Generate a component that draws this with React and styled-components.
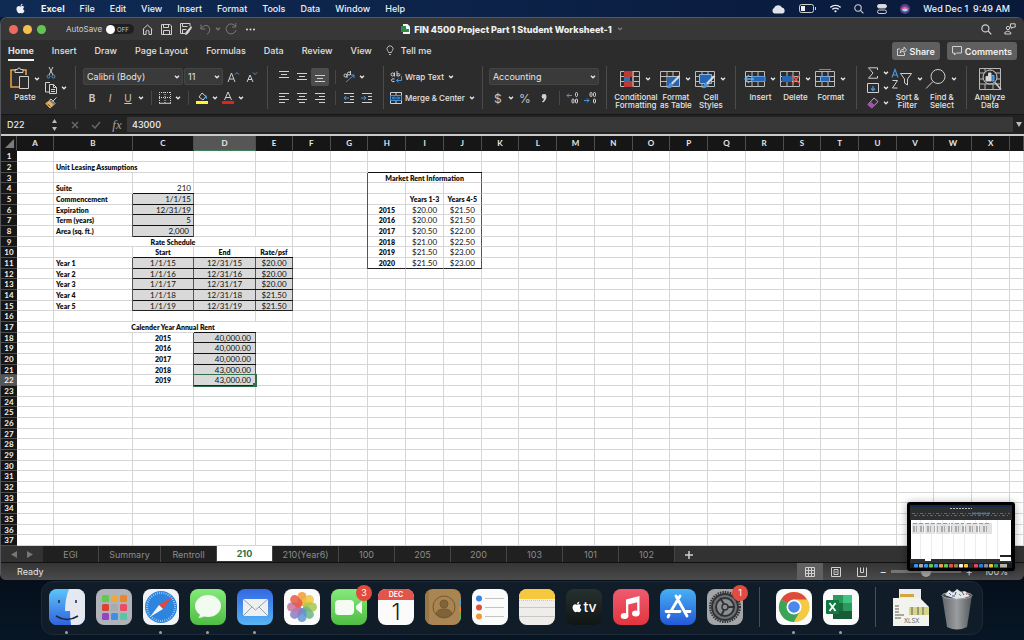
import React from 'react';
import styled, { createGlobalStyle, css } from 'styled-components';
import { FaApple, FaWifi } from 'react-icons/fa';

const GlobalStyle = createGlobalStyle`
  * {
    box-sizing: border-box;
  }

  body {
    margin: 0;
    background: #06101d;
    color: #e4e4e4;
    font-family: Inter, "Liberation Sans", sans-serif;
    font-size: 9px;
  }

  button, input, select {
    margin: 0;
    padding: 0;
    border: 0;
    background: none;
    color: inherit;
    font: inherit;
  }

  svg {
    display: block;
    flex: none;
  }
`;

const Desktop = styled.div`
  position: relative;
  display: flex;
  flex-direction: column;
  min-height: 100vh;
  background: linear-gradient(#0a2148, #081b3a 18px, #050d18 560px, #071625);
`;

/* menu bar */

const MenuBar = styled.nav`
  display: flex;
  align-items: center;
  justify-content: space-between;
  height: 17px;
  padding: 0 14px 0 15px;
  background: linear-gradient(90deg, #0f2a54, #09193a);
  white-space: nowrap;
`;

const MenuItems = styled.div`
  display: flex;
  align-items: center;
  gap: 15px;
`;

const MenuButton = styled.button`
  color: #eef1f6;
  font-size: 9px;
  line-height: 17px;
  font-weight: ${props => (props.$strong ? 700 : 500)};
`;

const StatusItems = styled.div`
  display: flex;
  align-items: center;
  gap: 13px;
  color: #eef1f6;
  font-weight: 500;
`;

/* window frame */

const Window = styled.main`
  border: 1px solid #55585c;
  border-width: 1px 0 0 1px;
  border-radius: 7px 7px 6px 6px;
  background: #2c2c2c;
  overflow: hidden;
`;

const TitleBar = styled.header`
  display: grid;
  grid-template-columns: 1fr auto 1fr;
  align-items: center;
  height: 22px;
  padding: 0 8px;
  background: #373737;
`;

const TitleSide = styled.div`
  display: flex;
  align-items: center;
  justify-content: ${props => (props.$end ? 'flex-end' : 'flex-start')};
  gap: ${props => (props.$end ? 12 : 8)}px;
`;

const Lights = styled.div`
  display: flex;
  gap: 5px;
  margin-right: 12px;
`;

const Light = styled.button`
  width: 9px;
  height: 9px;
  border-radius: 50%;
  background: ${props => props.$color};
`;

const AutoSave = styled.label`
  display: flex;
  align-items: center;
  gap: 4px;
  color: #d0d0d0;
  font-size: 8px;
`;

const Toggle = styled.span`
  display: flex;
  align-items: center;
  gap: 2px;
  width: 28px;
  height: 10px;
  border-radius: 5px;
  background: #1f1f1f;
  color: #c8c8c8;
  font-size: 6px;

  &::before {
    content: "";
    width: 9px;
    height: 9px;
    border-radius: 50%;
    background: #fff;
  }
`;

const HiddenCheck = styled.input`
  position: absolute;
  opacity: 0;
`;

const UndoGroup = styled.div`
  display: flex;
  align-items: center;
  gap: 3px;
`;

const DocTitle = styled.h1`
  display: flex;
  align-items: center;
  gap: 4px;
  margin: 0;
  color: #f0f0f0;
  font-size: 9px;
  font-weight: 800;
  white-space: nowrap;
`;

/* ribbon */

const TabBar = styled.div`
  display: flex;
  align-items: center;
  justify-content: space-between;
  height: 22px;
  padding: 0 7px;
`;

const TabList = styled.div`
  display: flex;
  align-items: center;
  gap: 18px;
`;

const RibbonTab = styled.button`
  display: flex;
  align-items: center;
  gap: 7px;
  height: 20px;
  border-bottom: 2px solid ${props => (props.$active ? '#f2f2f2' : 'transparent')};
  color: #e0e0e0;
  font-weight: ${props => (props.$active ? 700 : 500)};
  white-space: nowrap;
`;

const TellMe = styled(RibbonTab)`
  margin-left: -4px;
`;

const Actions = styled.div`
  display: flex;
  gap: 7px;
`;

const ActionButton = styled.button`
  display: flex;
  align-items: center;
  gap: 3px;
  height: 18px;
  padding: 0 5px;
  border-radius: 3px;
  background: #5f5f5f;
  color: #f0f0f0;
  font-weight: 600;
`;

const Ribbon = styled.section`
  display: flex;
  height: 53px;
  padding: 4px 0 5px;
  border-bottom: 1px solid #171717;
`;

const Group = styled.div`
  display: flex;
  padding: 0 ${props => props.$pad || 7}px;
  border-right: 1px solid ${props => (props.$last ? 'transparent' : '#4c4c4c')};
`;

const Stack = styled.div`
  display: flex;
  flex-direction: column;
`;

const Row = styled.div`
  display: flex;
  align-items: center;
  height: ${props => props.$height || 22}px;
`;

const Tool = styled.button`
  display: flex;
  align-items: center;
  justify-content: center;
  flex: none;
  width: ${props => props.$width || 18}px;
  height: 18px;
  border-radius: 2px;
  background: ${props => (props.$active ? '#4d4d4d' : 'none')};
`;

const Glyph = styled.span`
  color: #c8c8c8;
  font-size: ${props => props.$size || 10}px;
  font-weight: ${props => (props.$bold ? 700 : 400)};
  font-style: ${props => (props.$italic ? 'italic' : 'normal')};
  text-decoration: ${props => (props.$underline ? 'underline' : 'none')};
`;

const Separator = styled.span`
  width: 1px;
  height: 14px;
  margin: 0 4px 0 6px;
  background: #474747;
`;

const TextTool = styled.button`
  display: flex;
  align-items: center;
  gap: 3px;
  height: 18px;
  font-size: 8px;
  font-weight: 500;
  white-space: nowrap;
`;

const Picker = styled.div`
  display: flex;
  align-items: center;
  width: ${props => props.$width}px;
  height: 17px;
  margin-right: 1px;
  padding-right: 1px;
  border: 1px solid #454545;
  border-radius: 2px;
  background: #3a3a3a;
`;

const Select = styled.select`
  flex: 1;
  min-width: 0;
  height: 15px;
  padding-left: 3px;
  appearance: none;
  outline: none;
`;

const BigButton = styled.button`
  display: flex;
  flex-direction: column;
  align-items: center;
  width: ${props => props.$width || 36}px;
  height: 44px;
  white-space: nowrap;
`;

const BigTop = styled.span`
  display: flex;
  align-items: center;
  gap: 3px;
  height: 25px;
  margin-bottom: 2px;
`;

const BigLabel = styled.span`
  font-size: 8px;
  line-height: 8px;
  font-weight: 500;
`;

/* formula bar */

const FormulaBar = styled.div`
  display: flex;
  align-items: center;
  height: 19px;
  background: #222;
`;

const NameBox = styled.input`
  width: 46px;
  height: 16px;
  padding-left: 6px;
  font-weight: 500;
`;

const Stepper = styled.button`
  width: 15px;
  margin-right: 4px;
`;

const FxGlyph = styled.i`
  color: #a0a0a0;
  font-family: "Liberation Serif", serif;
  font-size: 13px;
`;

const FormulaInput = styled.input`
  flex: 1;
  min-width: 0;
  height: 15px;
  margin-left: 1px;
  padding-left: 5px;
  background: #383838;
  color: #f2f2f2;
  font-weight: 500;
`;

/* sheet */

const Sheet = styled.table`
  width: 100%;
  border-top: 2px solid #c9c9c9;
  border-collapse: separate;
  border-spacing: 0;
  table-layout: fixed;
  background: #fff;
  color: #111;
  font-family: Lato, "Liberation Sans", sans-serif;
  font-size: 8px;
  line-height: 9px;
`;

const ColumnHead = styled.th`
  height: 15px;
  padding: 0;
  border-right: 1px solid #4d4d4d;
  border-bottom: 1px solid ${props => (props.$active ? '#3f7f55' : '#161616')};
  background: ${props => (props.$active ? '#565656' : '#161616')};
  color: #e8e8e8;
  overflow: hidden;
`;

const SheetRow = styled.tr`
  height: 11px;

  &:nth-child(3n) {
    height: 10px;
  }
`;

const RowHead = styled.th`
  padding: 0;
  border-bottom: 1px solid #4d4d4d;
  background: ${props => (props.$active ? '#565656' : '#161616')};
  color: #f0f0f0;
  line-height: 8px;
`;

const shadow = edges => [
  edges.includes('l') ? '-1px 0 0 #555' : '',
  edges.includes('t') ? '0 -1px 0 #111' : ''
].filter(Boolean).join(', ') || 'none';

const Cell = styled.td`
  padding: 0 2px;
  border-right: 1px solid ${props => (props.$edges.includes('r') ? '#555' : '#d6d6d6')};
  border-bottom: 1px solid ${props => (props.$edges.includes('b') ? '#222' : '#d6d6d6')};
  background: ${props => (props.$shaded ? '#d9d9d9' : '#fff')};
  box-shadow: ${props => shadow(props.$edges)};
  font-size: ${props => (props.$bold ? 7 : 8)}px;
  font-weight: ${props => (props.$bold ? 800 : 400)};
  line-height: 8px;
  text-align: ${props => props.$align};
  white-space: nowrap;

  ${props => props.$indent && css`
    padding-right: 4px;
  `}

  ${props => props.$selected && css`
    position: relative;
    outline: 1px solid #2f7047;

    &::after {
      content: "";
      position: absolute;
      right: -2px;
      bottom: -2px;
      width: 4px;
      height: 4px;
      background: #2f7047;
    }
  `}
`;

/* sheet tabs and status bar */

const SheetTabs = styled.div`
  display: flex;
  height: 17px;
  border-bottom: 1px solid #111;
  background: #323232;
`;

const TabArrows = styled.div`
  display: flex;
  align-items: center;
  justify-content: center;
  gap: 10px;
  width: 42px;
`;

const SheetTab = styled.button`
  width: ${props => props.$width || 56}px;
  height: ${props => (props.$active ? 15 : 16)}px;
  border-right: 1px solid #454545;
  background: ${props => (props.$active ? '#fff' : '#202020')};
  color: ${props => (props.$active ? '#2f7047' : '#8c8c8c')};
  font-weight: ${props => (props.$active ? 700 : 400)};
  white-space: nowrap;
`;

const StatusBar = styled.footer`
  display: flex;
  align-items: center;
  height: 17px;
  padding: 0 16px;
  background: linear-gradient(#353535, #4a4a4a);
`;

const Ready = styled.span`
  flex: 1;
`;

const ViewButton = styled.button`
  display: flex;
  align-items: center;
  justify-content: center;
  width: 26px;
  height: 17px;
  background: ${props => (props.$active ? '#606060' : 'none')};
`;

const ZoomButton = styled.button`
  width: 16px;
  font-size: 11px;
`;

const Slider = styled.input`
  width: 70px;
  height: 3px;
  appearance: none;
  background: #757575;

  &::-webkit-slider-thumb {
    appearance: none;
    width: 10px;
    height: 10px;
    border-radius: 50%;
    background: #a8a8a8;
  }
`;

const ZoomValue = styled.span`
  margin-left: 7px;
`;

/* dock */

const Dock = styled.nav`
  display: flex;
  align-items: center;
  align-self: center;
  gap: 11px;
  height: 54px;
  margin-top: 1px;
  padding: 0 7px 3px;
  border: 1px solid #1d2937;
  border-radius: 12px;
  background: #111c29;
`;

const DockItem = styled.button`
  position: relative;
  width: 36px;
  height: 36px;

  ${props => props.$running && css`
    &::after {
      content: "";
      position: absolute;
      left: 16px;
      bottom: -9px;
      width: 3px;
      height: 3px;
      border-radius: 50%;
      background: #9aa1a9;
    }
  `}
`;

const DockDivider = styled.span`
  width: 1px;
  height: 40px;
  margin: 0 5px;
  background: #45505c;
`;

const Badge = styled.span`
  position: absolute;
  top: -4px;
  right: -5px;
  width: 16px;
  height: 16px;
  border-radius: 50%;
  background: #e24b3f;
  color: #fff;
  line-height: 16px;
`;

const Tile = styled.span`
  display: flex;
  align-items: center;
  justify-content: center;
  width: 36px;
  height: 36px;
  border-radius: 8px;
  background: ${props => props.$fill};
  color: #fff;
  overflow: hidden;
`;

const CalendarTile = styled(Tile)`
  flex-direction: column;
  justify-content: flex-start;
  color: #222;
  font-size: 23px;
  line-height: 24px;
  font-weight: 300;
`;

const CalendarMonth = styled.span`
  width: 100%;
  background: #e3544a;
  color: #fff;
  font-size: 7px;
  line-height: 11px;
  font-weight: 600;
`;

const TvText = styled.span`
  font-size: 14px;
  font-weight: 500;
`;

const Preview = styled.aside`
  position: absolute;
  top: 502px;
  right: 9px;
  width: 108px;
  height: 69px;
  padding: 3px;
  border-radius: 3px;
  background: #000;
  box-shadow: 0 1px 8px rgba(0, 0, 0, 0.35);
`;

/* icons */

const Icon = ({ w, h, children, ...rest }) => (
  <svg
    width={w}
    height={h}
    viewBox={`0 0 ${w} ${h}`}
    fill="none"
    stroke="#d0d0d0"
    strokeWidth="1"
    aria-hidden="true"
    {...rest}
  >
    {children}
  </svg>
);

const Chevron = ({ dim }) => (
  <Icon w={8} h={4} stroke={dim ? '#777' : '#e8e8e8'} strokeWidth="1.3"><path d="M2 .8 4 2.8 6 .8" /></Icon>
);

const SearchIcon = ({ size = 10 }) => (
  <Icon w={10} h={10} width={size} height={size} strokeWidth="1.1"><circle cx="4" cy="4" r="3.2" /><path d="m6.400 6.400 3 3" /></Icon>
);

const Lines = ({ rows }) => (
  <Icon w={12} h={12}>
    {rows.map(([x1, x2, y]) => <path key={y} d={`M${x1} ${y}H${x2}`} />)}
  </Icon>
);

const AlignIcons = {
  top: [[1, 11, 0.5], [3, 9, 3.5], [1, 11, 6.5]],
  middle: [[1, 11, 2.5], [3, 9, 5.5], [1, 11, 8.5]],
  bottom: [[1, 11, 4.5], [3, 9, 7.5], [1, 11, 10.5]],
  left: [[1, 11, 1.5], [1, 7, 4.5], [1, 11, 7.5], [1, 7, 10.5]],
  center: [[1, 11, 1.5], [3, 9, 4.5], [1, 11, 7.5], [3, 9, 10.5]],
  right: [[1, 11, 1.5], [5, 11, 4.5], [1, 11, 7.5], [5, 11, 10.5]]
};

const Indent = ({ out }) => (
  <Icon w={12} h={12}>
    <path d="M1 1.500h10M7 4.500h4M7 7.500h4M1 10.500h10" />
    <path stroke="#4b94d8" d={out ? 'M6 6H1m2-2L1 6l2 2' : 'M0 6h5M3 4l2 2-2 2'} />
  </Icon>
);

const PasteIcon = () => (
  <Icon w={20} h={23}>
    <path stroke="#e3a14a" strokeWidth="1.6" d="M6 3H1v17h8M13 3h3v5" />
    <path d="M5 2.500h2.500a1.500 1.500 0 0 1 3 0H13v3H5z" />
    <path fill="#2c2c2c" d="M9.500 9.500h9v12h-9z" />
  </Icon>
);

const CutIcon = () => (
  <Icon w={10} h={12}>
    <path d="m3 0 4 8M7 0 3 8" />
    <circle cx="2.500" cy="9.500" r="1.500" stroke="#4b94d8" />
    <circle cx="7.500" cy="9.500" r="1.500" stroke="#4b94d8" />
  </Icon>
);

const CopyIcon = () => (
  <Icon w={12} h={12}>
    <path d="M4 10H.5V.5H5M4.500 2.500h4l3 3v6h-7zM8.500 2.500v3h3M6 7.500h4M6 9.500h4" />
  </Icon>
);

const BrushIcon = () => (
  <Icon w={12} h={12}>
    <path d="m11.500.5-4 4M4.500 3l4.500 4.500 1-1L6 2z" />
    <path d="M4 4 .8 6.500 5 11l3.500-3z" fill="#e3b25f" stroke="#e3b25f" />
    <path d="m2.500 7 3 2.500" stroke="#5b4420" />
  </Icon>
);

const FontSizeIcon = ({ down }) => (
  <Icon w={13} h={12}>
    <path d={down ? 'm2 11 3-7 3 7M3 8.500h4' : 'm1 11 3.500-9L8 11M2.300 8h4.400'} />
    <path stroke="#4b94d8" d={down ? 'm8 1.500 2 2 2-2' : 'm8 3.500 2-2 2 2'} />
  </Icon>
);

const BorderIcon = () => (
  <Icon w={12} h={12}>
    <path strokeDasharray="1 1" d="M.5 0v11M11.500 0v11M6 0v11M0 .5h12M0 5.500h12" />
    <path d="M0 11.300h12" />
  </Icon>
);

const FillIcon = () => (
  <Icon w={12} h={12}>
    <path d="m3 5 3-4 4 3.500-3 3.500z" />
    <path d="M9.500 3q2 2 1 4" stroke="#4b94d8" />
    <path d="M0 10.500h12" stroke="#fff42c" strokeWidth="3" />
  </Icon>
);

const FontColorIcon = () => (
  <Icon w={12} h={12}>
    <path d="m2.500 8 3.500-8 3.500 8M3.500 5.500h5" />
    <path d="M0 10.500h12" stroke="#e2231a" strokeWidth="3" />
  </Icon>
);

const OrientationIcon = () => (
  <Icon w={12} h={12}>
    <circle cx="2.500" cy="4.500" r="1.500" /><circle cx="6" cy="2.500" r="1.500" /><path d="M4 3v4M7.500 0v4" />
    <path stroke="#4b94d8" d="m3 11 8-7M8 4h3v3" />
  </Icon>
);

const WrapIcon = () => (
  <Icon w={12} h={12}>
    <circle cx="2.500" cy="3.500" r="1.500" /><path d="M4.500 1.500v4M7 0v5M7 3q3-1 3 .7T7 5M4.500 8q-3-1-3 1.200t3 1.300" />
    <path stroke="#4b94d8" d="M11.500 5v4.500H6.500m2-2-2 2 2 2" />
  </Icon>
);

const MergeIcon = () => (
  <Icon w={12} h={12}>
    <path d="M.5.500h11v11H.5zM6 .5v3M6 8.500v3" />
    <path fill="#173a5e" stroke="#4b94d8" d="M.5 3.500h11v5H.5zM2 6h8M4 4.500 2.500 6 4 7.500M8 4.500 9.500 6 8 7.500" />
  </Icon>
);

const CommaIcon = () => (
  <Icon w={6} h={9} fill="#d0d0d0" stroke="none">
    <path d="M3 0a2.400 2.400 0 0 1 2.500 2.500Q5.500 6 2 8.500L1 7.500Q2.700 6.300 3 4.800A2.400 2.400 0 0 1 3 0z" />
  </Icon>
);

const DecimalIcon = ({ less }) => (
  <Icon w={13} h={12}>
    <path stroke="#4b94d8" d={less ? 'M0 8.500h5m-2-2 2 2-2 2' : 'M6 3.500H1m2-2-2 2 2 2'} />
    <rect x="9.500" y=".5" width="2" height="4" rx="1" />
    <rect x="9.500" y="7" width="2" height="4" rx="1" />
    {less ? <rect x="6" y=".5" width="2" height="4" rx="1" /> : <rect x="6" y="7" width="2" height="4" rx="1" />}
  </Icon>
);

const GridIcon = ({ children }) => (
  <Icon w={22} h={20}>
    <path d="M1.500 2.500h19v15h-19zM1.500 7.500h19M1.500 12.500h19M8 2.500v15M14 2.500v15" stroke="#bdbdbd" />
    {children}
  </Icon>
);

const PaintBrush = () => (
  <>
    <path d="m20.500 7-8 8" stroke="#d8d8d8" strokeWidth="2.200" />
    <path d="M12 13.500q-2 .5-3 3.500-1 1.500-2 1.800 5.500 1.700 7-2.800z" fill="#4b94d8" stroke="none" />
  </>
);

const ConditionalIcon = () => (
  <GridIcon>
    <path fill="#b93a36" stroke="none" d="M5 2h9v6H5zM5 12h10v6H5z" />
    <path fill="#2f6fb5" stroke="none" d="M5 8h6v4H5z" />
    <path d="M14 2v16" stroke="#bdbdbd" />
  </GridIcon>
);

const FormatTableIcon = () => (
  <GridIcon><path fill="#2565b4" stroke="none" d="M8 8h12v9H8z" /><PaintBrush /></GridIcon>
);

const CellStylesIcon = () => (
  <GridIcon><path fill="#2565b4" stroke="#8ab6e4" d="M5.500 5.500h12v9h-12z" /><PaintBrush /></GridIcon>
);

const InsertIcon = () => (
  <GridIcon>
    <path fill="#2565b4" stroke="#5f9fe0" d="M8 7.500h13v5H8z" />
    <path stroke="#6cabe8" strokeWidth="1.300" d="M10 10H1m4-4-4 4 4 4" />
  </GridIcon>
);

const DeleteIcon = () => (
  <GridIcon>
    <path fill="#2565b4" stroke="none" d="M3 7h10v6H3z" />
    <path stroke="#e0564b" strokeWidth="1.300" d="m13 6 8 9M21 6l-8 9" />
  </GridIcon>
);

const FormatIcon = () => (
  <GridIcon>
    <path fill="#2565b4" stroke="#6cabe8" d="M6.500 7.500h9v5h-9z" />
    <path stroke="#4b94d8" d="M5 .5h12" />
  </GridIcon>
);

const SumIcon = () => (
  <Icon w={12} h={12}><path d="M10.500 3V.800H1.500L6 6l-4.500 5.200h9V9" /></Icon>
);

const FillDownIcon = () => (
  <Icon w={12} h={12}><path d="M.5 1.500h11v9H.5z" /><path stroke="#4b94d8" strokeWidth="1.300" d="M6 4v4.500M4 6.500l2 2 2-2" /></Icon>
);

const EraserIcon = () => (
  <Icon w={12} h={12}><path d="m7 1 4 3.500L5 11 1 7.500z" stroke="#d59be0" /><path d="m3.500 5 4 3.500L5 11 1 7.500z" fill="#a74cb8" stroke="#a74cb8" /></Icon>
);

const SortIcon = () => (
  <Icon w={22} h={22}>
    <path stroke="#4b94d8" strokeWidth="1.200" d="M1 9.500 4 1.500l3 8M2 7h4" />
    <path d="M1.500 12.500h5l-5 7.500h5M9.500 5.500h11L16.500 11v6L13.500 15v-4z" />
  </Icon>
);

const FindIcon = () => (
  <Icon w={22} h={22}><circle cx="13" cy="8.500" r="7" /><path d="m8 13.500-7 7" /></Icon>
);

const AnalyzeIcon = () => (
  <Icon w={24} h={24}>
    <path d="M1.500 1.500h21v21h-21zM1.500 6h21M1.500 12h4M18 12h4M1.500 17h21M7 1.500v3M7 17v5M15 17v5" stroke="#b8b8b8" />
    <circle cx="12" cy="10" r="7" fill="#2c2c2c" />
    <path d="M8 9.500h2.500V14H8zM10.500 6H13v8h-2.500z" fill="#ddd" />
    <path d="M13.500 8.500H16V14h-2.500z" fill="#2f7fd0" stroke="#6cabe8" />
    <path d="m17 15.500 6 7" strokeWidth="1.500" />
  </Icon>
);

/* dock artwork */

const FinderArt = () => (
  <svg width="36" height="36">
    <defs><linearGradient id="finder" x2="0" y2="1"><stop stopColor="#5cc5f9" /><stop offset="1" stopColor="#2f62df" /></linearGradient></defs>
    <path fill="url(#finder)" d="M0 0h36v36H0z" />
    <path fill="#e3e8f1" d="M20 0h16v36H22q-1-7-1-14h-5q0-12 4-22z" />
    <path d="M10 11v3M27 11v3M7 27q11 7 22 0" stroke="#1c2938" strokeWidth="1.500" fill="none" />
  </svg>
);

const pads = ['#63c84b', '#f0a73b', '#e8862e', '#dd4236', '#a5abb0', '#ee4b62', '#9346be', '#3b8fe8', '#5ac5a5'];

const LaunchpadArt = () => (
  <svg width="36" height="36">
    {pads.map((color, i) => (
      <rect key={color} x={6 + (i % 3) * 9} y={6 + Math.floor(i / 3) * 9} width="7" height="7" rx="1.500" fill={color} />
    ))}
  </svg>
);

const SafariArt = () => (
  <svg width="36" height="36">
    <circle cx="18" cy="18" r="16" fill="#2d85df" />
    <circle cx="18" cy="18" r="14" fill="none" stroke="#b8dcf8" strokeWidth="2" strokeDasharray=".7 1.500" />
    <path d="m29 8-13 8 4 4z" fill="#ec4438" /><path d="m7 28 9-12 4 4z" fill="#f4f4f4" />
  </svg>
);

const MessagesArt = () => (
  <svg width="36" height="36"><ellipse cx="18" cy="17" rx="13" ry="11" fill="#f2fbf0" /><path d="M10 24q0 4-2 5 5 0 7-3z" fill="#f2fbf0" /></svg>
);

const MailArt = () => (
  <svg width="36" height="36" fill="none" stroke="#989fa7">
    <path fill="#edf0f3" stroke="none" d="M6 10h25v17H6z" /><path d="m6 10 12.500 11L31 10M6 27l9-9M31 27l-9-9" />
  </svg>
);

const petals = ['#f29a35', '#edc63b', '#a6c750', '#6bb783', '#5d95d4', '#8b7ac4', '#c573a0', '#e6594a'];

const PhotosArt = () => (
  <svg width="36" height="36">
    {petals.map((color, i) => (
      <rect key={color} x="13.500" y="3" width="9" height="14" rx="4.500" fill={color} opacity=".85" transform={`rotate(${i * 45} 18 18)`} />
    ))}
  </svg>
);

const FaceTimeArt = () => (
  <svg width="36" height="36" fill="#f4fbf3"><rect x="4" y="11" width="19" height="15" rx="4" /><path d="m25 17 6-5v13l-6-5z" /></svg>
);

const ContactsArt = () => (
  <svg width="36" height="36" fill="none" stroke="#765a30">
    <path stroke="none" fill="#9a7843" d="M0 0h4v36H0z" />
    <path stroke="none" fill="#4a9ed6" d="M34.500 11H36v6h-1.500z" /><path stroke="none" fill="#e88b35" d="M34.500 18H36v6h-1.500z" /><path stroke="none" fill="#5dbb55" d="M34.500 25H36v6h-1.500z" />
    <circle cx="19" cy="18" r="11" /><circle cx="19" cy="15" r="4" fill="#80633a" /><path fill="#80633a" d="M11 25q1-5 8-5t8 5q-8 7-16 0z" />
  </svg>
);

const RemindersArt = () => (
  <svg width="36" height="36" stroke="#c3c3c3">
    <path d="M13 9.500h19M13 18.500h19M13 27.500h19" />
    <g stroke="none"><circle cx="7" cy="9.500" r="3" fill="#3b7fe8" /><circle cx="7" cy="18.500" r="3" fill="#e0503e" /><circle cx="7" cy="27.500" r="3" fill="#e89b38" /></g>
  </svg>
);

const NotesArt = () => (
  <svg width="36" height="36" stroke="#c9c8c4">
    <path stroke="none" fill="#f6c83e" d="M0 0h36v10H0z" /><path d="M0 11.500h36" strokeDasharray="1 1" /><path d="M0 18.500h36M0 27.500h36" />
  </svg>
);

const MusicArt = () => (
  <svg width="36" height="36" fill="#fff">
    <path d="M13 10.500 26.500 7v17.500h-2.300V13.200l-8.900 2.300v12H13z" />
    <ellipse cx="11.500" cy="27" rx="3.800" ry="3" /><ellipse cx="22.800" cy="24.500" rx="3.800" ry="3" />
  </svg>
);

const AppStoreArt = () => (
  <svg width="36" height="36" stroke="#fff" strokeWidth="2.800" strokeLinecap="round"><path d="m16 7 11 20M20 7 11 22M6 22.500h14M25 22.500h5M9 26l-1 2" /></svg>
);

const SettingsArt = () => (
  <svg width="36" height="36" fill="none" stroke="#303235">
    <circle cx="18" cy="18" r="15" strokeWidth="2" strokeDasharray="1.500 1" />
    <circle cx="18" cy="18" r="13" fill="#6d7074" strokeWidth="2" />
    <circle cx="18" cy="18" r="9" fill="#8c8f92" strokeWidth="2" />
    <circle cx="18" cy="18" r="3" strokeWidth="1.500" /><path d="m17 21-3 6M21 18h7M17 15l-4-6" strokeWidth="2" />
  </svg>
);

const ChromeArt = () => (
  <svg width="36" height="36">
    <circle cx="18" cy="18" r="15" fill="#f4ca45" />
    <path d="M18 18 5 10.500a15 15 0 0 1 26 0z" fill="#dd4b3e" /><path d="M18 18 5 10.500A15 15 0 0 0 18 33l6-11z" fill="#3ba458" />
    <path d="M18 10.500h13.500a15 15 0 0 1-13.500 22.500l6.500-11z" fill="#f4ca45" />
    <circle cx="18" cy="18" r="7.500" fill="#fff" /><circle cx="18" cy="18" r="5.800" fill="#4a87ee" />
  </svg>
);

const ExcelArt = () => (
  <svg width="36" height="36">
    <path fill="#2b9a5d" d="M10 6h10v8H10z" /><path fill="#3fc481" d="M20 6h9v8h-9z" />
    <path fill="#1c6e41" d="M10 14h10v8H10z" /><path fill="#2b9a5d" d="M20 14h9v8h-9z" />
    <path fill="#185c37" d="M10 22h19v8H10z" /><rect x="3" y="11" width="13" height="14" rx="1" fill="#107840" />
    <path d="m6.500 14 6 8M12.500 14l-6 8" stroke="#fff" strokeWidth="1.800" />
  </svg>
);

const FilesArt = () => (
  <svg width="38" height="38">
    <path fill="#ececec" d="M7 0h22v20H7z" /><path fill="#d6a541" d="M8 5h14v3H8z" />
    <path fill="#f3f3ee" d="M1 9h27l9 9v19H1z" /><path fill="#d7d58c" d="M17 18h20v8H17z" />
    <path d="M3 17h4M3 20h4M3 23h4M3 26h9M3 29h6M20 18v8M26 18v8M31 18v8" stroke="#5c5c50" strokeWidth="1" />
    <text x="12" y="34" fontSize="6" fill="#666">XLSX</text>
  </svg>
);

const TrashArt = () => (
  <svg width="36" height="42">
    <defs><linearGradient id="bin"><stop stopColor="#63676a" /><stop offset=".5" stopColor="#9a9da0" /><stop offset="1" stopColor="#55595c" /></linearGradient></defs>
    <path fill="url(#bin)" d="M3 6h30l-5 32q-10 5-20 0z" />
    <ellipse cx="18" cy="6.500" rx="15" ry="3.500" fill="#3f4346" stroke="#a4a7aa" />
    <path fill="#e4e6e8" d="m6 6 4-5 4 3 4-4 4 3 4-1 5 5-6 2-8 1z" />
    <path d="m10 4 2 2M17 3l-1 3M23 3l2 3M13 7h3" stroke="#3c5d8b" /><path d="m20 5 2 2M27 4l1 2" stroke="#cc6344" />
  </svg>
);

const previewDots = ['#3a93e8', '#a9adb2', '#3a93e8', '#63c84b', '#3a93e8', '#e8a24c', '#63c84b', '#e3544a', '#a07d45', '#f2f2f2', '#f6c83e', '#2b3131', '#e8455a', '#2d7be0', '#8a8c8e', '#e8c23c', '#2b9a5d'];

const PreviewArt = () => (
  <svg width="102" height="63">
    <path fill="#2d2e30" d="M0 0h102v15H0z" /><path fill="#14264a" d="M0 0h102v2H0z" />
    <path d="M2 8.500h98M4 10.500h94" stroke="#66696c" strokeDasharray="3 2 1 2" /><path d="M40 3.500h22" stroke="#bbb" strokeDasharray="2 1" />
    <path d="M62 8.500h18" stroke="#5b6f8a" strokeWidth="2" strokeDasharray="4 1" />
    <path fill="#fff" d="M1 15h100v39H1z" />
    <path stroke="#ececec" d="M10.500 15v39M21.500 15v39M32.500 15v39M43.500 15v39M54.500 15v39M65.500 15v39M76.500 15v39M87.500 15v39" />
    <path fill="#e2e2e2" d="M2 18h80v11H2z" /><path d="M3 18.500h78" stroke="#999" strokeDasharray="4 2" />
    <path d="M3 24h76" stroke="#aaa" strokeWidth="6" strokeDasharray="2 1 1 3" />
    <path stroke="#f5f5f5" d="M14.500 18v11M25.500 18v11M40.500 18v11M54.500 18v11M68.500 18v11" />
    <path fill="#2d2e30" d="M0 54h102v4H0z" /><path fill="#fff" d="M15 54h6v2h-6zM90 50h11v6H90z" /><path fill="#222" d="M90 50h11v2H90z" />
    <path fill="#131d2b" d="M0 58h102v5H0z" />
    {previewDots.map((color, i) => <rect key={i} x={4 + i * 5} y="59" width="4" height="3.500" rx=".8" fill={color} />)}
    <rect x="90" y="59" width="7" height="3.500" fill="#b5b5a6" />
  </svg>
);

/* data */

const columns = 'ABCDEFGHIJKLMNOPQRSTUVWX'.split('');
const columnWidths = { A: 37, B: 79, C: 61, D: 62, E: 37 };
const rowCount = 37;

const cells = {
  B2: { text: 'Unit Leasing Assumptions', bold: true, span: 2 },
  B4: { text: 'Suite', bold: true },
  C4: { text: '210', align: 'right' },
  B9: { text: 'Rate Schedule', bold: true, align: 'center', span: 4 },
  C10: { text: 'Start', bold: true, align: 'center' },
  D10: { text: 'End', bold: true, align: 'center' },
  E10: { text: 'Rate/psf', bold: true, align: 'center' },
  B17: { text: 'Calender Year Annual Rent', bold: true, align: 'center', span: 4 },
  H3: { text: 'Market Rent Information', bold: true, align: 'center', span: 3, edges: 'tlr' },
  H4: { edges: 'l' },
  J4: { edges: 'r' },
  H5: { edges: 'l' },
  I5: { text: 'Years 1-3', bold: true, align: 'center' },
  J5: { text: 'Years 4-5', bold: true, align: 'center', edges: 'r' }
};

[
  ['Commencement', '1/1/15'],
  ['Expiration', '12/31/19'],
  ['Term (years)', '5'],
  ['Area (sq. ft.)', '2,000']
].forEach(([label, value], i) => {
  cells[`B${5 + i}`] = { text: label, bold: true };
  cells[`C${5 + i}`] = { text: value, align: 'right', shaded: true, edges: 'tlrb', indent: i === 3 };
});

['$20.00', '$20.00', '$20.00', '$21.50', '$21.50'].forEach((rate, i) => {
  const row = 11 + i;
  const box = { align: 'center', shaded: true, edges: 'tlrb' };
  cells[`B${row}`] = { text: `Year ${i + 1}`, bold: true };
  cells[`C${row}`] = { text: `1/1/${15 + i}`, ...box };
  cells[`D${row}`] = { text: `12/31/${15 + i}`, ...box };
  cells[`E${row}`] = { text: rate, ...box };
});

['40,000.00', '40,000.00', '40,000.00', '43,000.00', '43,000.00'].forEach((rent, i) => {
  cells[`C${18 + i}`] = { text: `${2015 + i}`, bold: true, align: 'center' };
  cells[`D${18 + i}`] = { text: rent, align: 'right', indent: true, shaded: true, edges: 'tlrb', selected: i === 4 };
});

[
  ['$20.00', '$21.50'],
  ['$20.00', '$21.50'],
  ['$20.50', '$22.00'],
  ['$21.00', '$22.50'],
  ['$21.50', '$23.00'],
  ['$21.50', '$23.00']
].forEach(([early, late], i) => {
  const bottom = i === 5 ? 'b' : '';
  cells[`H${6 + i}`] = { text: `${2015 + i}`, bold: true, align: 'center', edges: `l${bottom}` };
  cells[`I${6 + i}`] = { text: early, align: 'center', edges: bottom };
  cells[`J${6 + i}`] = { text: late, align: 'center', edges: `r${bottom}` };
});

const sheets = [
  ['EGI'], ['Summary', 62], ['Rentroll'], ['210'], ['210(Year6)', 66],
  ['100'], ['205'], ['200'], ['103'], ['101'], ['102']
];

const dock = [
  { name: 'Finder', fill: '#3b8fee', art: <FinderArt />, running: true },
  { name: 'Launchpad', fill: '#b0b4b9', art: <LaunchpadArt /> },
  { name: 'Safari', fill: '#f2f3f4', art: <SafariArt />, running: true },
  { name: 'Messages', fill: 'linear-gradient(#85ea7a, #4fbd43)', art: <MessagesArt />, running: true },
  { name: 'Mail', fill: 'linear-gradient(#3567e2, #57b5f5)', art: <MailArt />, running: true },
  { name: 'Photos', fill: '#fbfbfb', art: <PhotosArt /> },
  { name: 'FaceTime', fill: 'linear-gradient(#85ea7a, #4fbd43)', art: <FaceTimeArt />, badge: '3' },
  { name: 'Calendar' },
  { name: 'Contacts', fill: '#a88552', art: <ContactsArt /> },
  { name: 'Reminders', fill: '#fbfbfb', art: <RemindersArt /> },
  { name: 'Notes', fill: '#eeede9', art: <NotesArt /> },
  { name: 'TV', fill: 'linear-gradient(#26322f, #101414)', art: <><FaApple size={12} /><TvText>tv</TvText></> },
  { name: 'Music', fill: 'linear-gradient(#ef5b70, #e3353f)', art: <MusicArt /> },
  { name: 'App Store', fill: 'linear-gradient(#46b0f3, #2459d8)', art: <AppStoreArt /> },
  { name: 'System Preferences', fill: '#a3a5a7', art: <SettingsArt />, badge: '1' },
  null,
  { name: 'Chrome', fill: '#fbfbfb', art: <ChromeArt />, running: true },
  { name: 'Excel', fill: '#fbfbfb', art: <ExcelArt />, running: true },
  null
];

const menus = ['Excel', 'File', 'Edit', 'View', 'Insert', 'Format', 'Tools', 'Data', 'Window', 'Help'];
const ribbonTabs = ['Home', 'Insert', 'Draw', 'Page Layout', 'Formulas', 'Data', 'Review', 'View'];

const TopMenu = () => (
  <MenuBar aria-label="Menu bar">
    <MenuItems>
      <MenuButton aria-label="Apple menu"><FaApple size={11} /></MenuButton>
      {menus.map((name, i) => <MenuButton key={name} $strong={i === 0}>{name}</MenuButton>)}
    </MenuItems>
    <StatusItems>
      <Icon w={15} h={10} fill="#dfe3ea" stroke="none"><path d="M3.500 9.500a3 3 0 0 1-.5-5.500A4.500 4.500 0 0 1 11 3.500a3.200 3.200 0 0 1 1 6z" /></Icon>
      <Icon w={18} h={9}><rect x=".5" y=".5" width="14" height="8" rx="2" /><path d="M16.500 3v3" /><rect x="2" y="2" width="4" height="5" fill="#eee" stroke="none" /></Icon>
      <FaWifi size={11} />
      <SearchIcon />
      <Icon w={10} h={10}><rect x=".5" y=".5" width="9" height="3.500" rx="1.700" fill="#ddd" /><rect x=".5" y="6" width="9" height="3.500" rx="1.700" /></Icon>
      <Icon w={10} h={10} stroke="none"><circle cx="5" cy="5" r="5" fill="#5a3f8f" /><path d="M1 5q4-5 8 0-4 4-8 0z" fill="#e25c8c" /><path d="M2 6q3-3 6 0-3 3-6 0z" fill="#8fe0ee" /></Icon>
      <span>Wed Dec 1&nbsp; 9:49 AM</span>
    </StatusItems>
  </MenuBar>
);

const Title = () => (
  <TitleBar>
    <TitleSide>
      <Lights>
        <Light $color="#ec6a5e" aria-label="Close" />
        <Light $color="#f4bf4f" aria-label="Minimize" />
        <Light $color="#61c554" aria-label="Zoom window" />
      </Lights>
      <AutoSave>
        AutoSave
        <HiddenCheck type="checkbox" />
        <Toggle>OFF</Toggle>
      </AutoSave>
      <Icon w={11} h={11}><path d="M.8 5.500 5.500 1l4.700 4.500M1.500 5v5.500H4V7q1.500-1.500 3 0v3.500h2.500V5" /></Icon>
      <Icon w={11} h={11}><path d="M.5.500h8.500l1.500 1.500v8.500H.5zM2.500.5v3h5v-3M2.500 10.500V6.500h6v4" /></Icon>
      <Icon w={12} h={12}><path d="M5 10.500H.5V.5h9.500V3M2.500.5v3h5M2.500 10V6.500h4" /><path d="m11 3.500-5 6-.5 2 2-.8 4-6z" fill="#ddd" /></Icon>
      <UndoGroup>
        <Icon w={11} h={11} stroke="#7a7a7a"><path d="M1 .5v4.500h4.500M1 5q3-5 7-3 4 4-1 8.500" /></Icon>
        <Chevron dim />
        <Icon w={12} h={12} stroke="#7a7a7a"><path d="M10.500 3.500A5 5 0 1 0 11 7M10.800 0v4H7" /></Icon>
      </UndoGroup>
      <Icon w={11} h={3} fill="#ddd" stroke="none"><circle cx="2" cy="1.500" r="1" /><circle cx="5.500" cy="1.500" r="1" /><circle cx="9" cy="1.500" r="1" /></Icon>
    </TitleSide>
    <DocTitle>
      <Icon w={9} h={10} stroke="none"><path fill="#f2f2f2" d="M2 0h4.500L9 2.500V10H2z" /><path fill="#2d8a4e" d="M0 2h5v6H0zM5 5h3v3H5z" /></Icon>
      FIN 4500 Project Part 1 Student Worksheet-1
      <Chevron dim />
    </DocTitle>
    <TitleSide $end>
      <SearchIcon size={11} />
      <Icon w={12} h={12}><circle cx="4" cy="5" r="1.700" /><path d="M.8 11V9.500q3-3 6 0V11zM6.500.8h4.700v3.400H9L7.500 5.500V4.200h-1z" /></Icon>
    </TitleSide>
  </TitleBar>
);

const Tabs = () => (
  <TabBar>
    <TabList role="tablist">
      {ribbonTabs.map((name, i) => (
        <RibbonTab key={name} role="tab" aria-selected={i === 0} $active={i === 0}>{name}</RibbonTab>
      ))}
      <TellMe>
        <Icon w={8} h={11} stroke="#b8b8b8"><path d="M2.500 7.500q0-1-1-2a3 3 0 1 1 5 0q-1 1-1 2zM3 9.500h2" /></Icon>
        Tell me
      </TellMe>
    </TabList>
    <Actions>
      <ActionButton>
        <Icon w={10} h={10}><path d="M3 3H.5v6.500h7V7M3 7q0-4 4-4V1l2.500 3L7 6.500V5Q5 5 3 7z" /></Icon>
        Share
      </ActionButton>
      <ActionButton>
        <Icon w={10} h={10}><path d="M.5.500h9v6.500H4.500l-2 2V7h-2z" /></Icon>
        Comments
      </ActionButton>
    </Actions>
  </TabBar>
);

const Big = ({ icon, lines, width, plain }) => (
  <BigButton $width={width}>
    <BigTop>{icon}{!plain && <Chevron />}</BigTop>
    {lines.map(line => <BigLabel key={line}>{line}</BigLabel>)}
  </BigButton>
);

const RibbonTools = () => (
  <Ribbon aria-label="Home ribbon">
    <Group>
      <Big width={34} icon={<PasteIcon />} lines={['Paste']} />
      <Stack>
        <Row $height={14}><Tool aria-label="Cut"><CutIcon /></Tool></Row>
        <Row $height={16}><Tool aria-label="Copy"><CopyIcon /></Tool></Row>
        <Row $height={14}><Tool aria-label="Format painter"><BrushIcon /></Tool></Row>
      </Stack>
      <Row $height={44}><Chevron /></Row>
    </Group>
    <Group>
      <Stack>
        <Row>
          <Picker $width={100}>
            <Select aria-label="Font"><option>Calibri (Body)</option></Select>
            <Chevron />
          </Picker>
          <Picker $width={39}>
            <Select aria-label="Font size"><option>11</option></Select>
            <Chevron />
          </Picker>
          <Tool aria-label="Grow font"><FontSizeIcon /></Tool>
          <Tool aria-label="Shrink font"><FontSizeIcon down /></Tool>
        </Row>
        <Row>
          <Tool aria-label="Bold"><Glyph $bold>B</Glyph></Tool>
          <Tool aria-label="Italic"><Glyph $italic>I</Glyph></Tool>
          <Tool aria-label="Underline"><Glyph $underline>U</Glyph></Tool>
          <Chevron />
          <Separator />
          <Tool aria-label="Borders"><BorderIcon /></Tool>
          <Chevron />
          <Separator />
          <Tool aria-label="Fill color"><FillIcon /></Tool>
          <Chevron />
          <Tool aria-label="Font color"><FontColorIcon /></Tool>
          <Chevron />
        </Row>
      </Stack>
    </Group>
    <Group>
      <Stack>
        <Row>
          <Tool aria-label="Align top"><Lines rows={AlignIcons.top} /></Tool>
          <Tool aria-label="Align middle"><Lines rows={AlignIcons.middle} /></Tool>
          <Tool aria-label="Align bottom" $active><Lines rows={AlignIcons.bottom} /></Tool>
          <Separator />
          <Tool aria-label="Orientation"><OrientationIcon /></Tool>
          <Chevron />
        </Row>
        <Row>
          <Tool aria-label="Align left"><Lines rows={AlignIcons.left} /></Tool>
          <Tool aria-label="Align center"><Lines rows={AlignIcons.center} /></Tool>
          <Tool aria-label="Align right"><Lines rows={AlignIcons.right} /></Tool>
          <Separator />
          <Tool aria-label="Decrease indent"><Indent out /></Tool>
          <Tool aria-label="Increase indent"><Indent /></Tool>
        </Row>
      </Stack>
    </Group>
    <Group $pad={6}>
      <Stack>
        <Row><TextTool><WrapIcon />Wrap Text<Chevron /></TextTool></Row>
        <Row><TextTool><MergeIcon />Merge &amp; Center<Chevron /></TextTool></Row>
      </Stack>
    </Group>
    <Group $pad={6}>
      <Stack>
        <Row>
          <Picker $width={110}>
            <Select aria-label="Number format"><option>Accounting</option></Select>
            <Chevron />
          </Picker>
        </Row>
        <Row>
          <Tool aria-label="Currency"><Glyph $size={12}>$</Glyph></Tool>
          <Chevron />
          <Tool aria-label="Percent" $width={20}><Glyph $size={12}>%</Glyph></Tool>
          <Tool aria-label="Comma style"><CommaIcon /></Tool>
          <Separator />
          <Tool aria-label="Increase decimal"><DecimalIcon /></Tool>
          <Tool aria-label="Decrease decimal"><DecimalIcon less /></Tool>
        </Row>
      </Stack>
    </Group>
    <Group>
      <Big width={44} icon={<ConditionalIcon />} lines={['Conditional', 'Formatting']} />
      <Big width={36} icon={<FormatTableIcon />} lines={['Format', 'as Table']} />
      <Big width={34} icon={<CellStylesIcon />} lines={['Cell', 'Styles']} />
    </Group>
    <Group>
      <Big width={35} icon={<InsertIcon />} lines={['Insert']} />
      <Big width={35} icon={<DeleteIcon />} lines={['Delete']} />
      <Big icon={<FormatIcon />} lines={['Format']} />
    </Group>
    <Group>
      <Stack>
        <Row $height={14}><Tool aria-label="AutoSum"><SumIcon /></Tool><Chevron /></Row>
        <Row $height={16}><Tool aria-label="Fill"><FillDownIcon /></Tool><Chevron /></Row>
        <Row $height={14}><Tool aria-label="Clear"><EraserIcon /></Tool><Chevron /></Row>
      </Stack>
      <Big width={35} icon={<SortIcon />} lines={['Sort &', 'Filter']} />
      <Big width={34} icon={<FindIcon />} lines={['Find &', 'Select']} />
    </Group>
    <Group $pad={5} $last>
      <Big plain icon={<AnalyzeIcon />} lines={['Analyze', 'Data']} />
    </Group>
  </Ribbon>
);

const Formula = () => (
  <FormulaBar>
    <NameBox aria-label="Name box" defaultValue="D22" />
    <Stepper aria-label="Choose name">
      <Icon w={15} h={14} fill="#bbb" stroke="none"><path d="m5 5 2.500-4L10 5zM5 9l2.500 4L10 9z" /></Icon>
    </Stepper>
    <Tool aria-label="Cancel"><Icon w={8} h={8} stroke="#666" strokeWidth="1.500"><path d="m1 1 6 6M7 1 1 7" /></Icon></Tool>
    <Tool aria-label="Enter" $width={24}><Icon w={10} h={8} stroke="#666" strokeWidth="1.500"><path d="m1 4 3 3 5-6" /></Icon></Tool>
    <Tool aria-label="Insert function"><FxGlyph>fx</FxGlyph></Tool>
    <FormulaInput aria-label="Formula" defaultValue="43000" />
    <Tool aria-label="Expand formula bar" $width={11}><Icon w={6} h={5} fill="#bbb" stroke="none"><path d="M0 0h6L3 5z" /></Icon></Tool>
  </FormulaBar>
);

const Grid = () => {
  const renderRow = row => {
    const out = [];
    for (let i = 0; i < columns.length; i++) {
      const cell = cells[`${columns[i]}${row}`] || {};
      out.push(
        <Cell
          key={columns[i]}
          colSpan={cell.span}
          $align={cell.align || 'left'}
          $bold={cell.bold}
          $shaded={cell.shaded}
          $edges={cell.edges || ''}
          $indent={cell.indent}
          $selected={cell.selected}
        >
          {cell.text}
        </Cell>
      );
      i += (cell.span || 1) - 1;
    }
    return out;
  };

  return (
    <Sheet>
      <colgroup>
        <col width="16" />
        {columns.map(name => <col key={name} width={columnWidths[name]} />)}
        <col width="14" />
      </colgroup>
      <thead>
        <tr>
          <ColumnHead><Icon w={14} h={14} fill="#7c7c7c" stroke="none"><path d="M13 3v9H4z" /></Icon></ColumnHead>
          {columns.map(name => <ColumnHead key={name} $active={name === 'D'}>{name}</ColumnHead>)}
          <ColumnHead />
        </tr>
      </thead>
      <tbody>
        {Array.from({ length: rowCount }, (_, i) => i + 1).map(row => (
          <SheetRow key={row}>
            <RowHead $active={row === 22}>{row}</RowHead>
            {renderRow(row)}
            <Cell $edges="" $align="left" />
          </SheetRow>
        ))}
      </tbody>
    </Sheet>
  );
};

const Bottom = () => (
  <>
    <SheetTabs>
      <TabArrows>
        <Icon w={6} h={7} fill="#777" stroke="none"><path d="M6 0v7L0 3.500z" /></Icon>
        <Icon w={6} h={7} fill="#777" stroke="none"><path d="M0 0v7l6-3.500z" /></Icon>
      </TabArrows>
      {sheets.map(([name, width]) => (
        <SheetTab key={name} $width={width} $active={name === '210'}>{name}</SheetTab>
      ))}
      <Tool aria-label="Add sheet" $width={27}><Icon w={8} h={8} strokeWidth="1.500"><path d="M4 0v8M0 4h8" /></Icon></Tool>
    </SheetTabs>
    <StatusBar>
      <Ready>Ready</Ready>
      <ViewButton aria-label="Normal view" $active><Icon w={10} h={10}><path d="M.5.500h9v9h-9zM3.500.5v9M6.500.5v9M.5 3.500h9M.5 6.500h9" /></Icon></ViewButton>
      <ViewButton aria-label="Page layout view"><Icon w={10} h={10}><path d="M.5.500h9v9h-9zM3 2.500h4v5H3zM4 5h2" /></Icon></ViewButton>
      <ViewButton aria-label="Page break view"><Icon w={10} h={10}><path d="M.5.500v9h9v-9M3.500.5v5h3v-5" /></Icon></ViewButton>
      <ZoomButton aria-label="Zoom out">−</ZoomButton>
      <Slider type="range" aria-label="Zoom" defaultValue="50" />
      <ZoomButton aria-label="Zoom in">+</ZoomButton>
      <ZoomValue>100%</ZoomValue>
    </StatusBar>
  </>
);

const AppDock = () => (
  <Dock aria-label="Dock">
    {dock.map((app, i) => {
      if (!app) {
        return <DockDivider key={i} />;
      }
      return (
        <DockItem key={app.name} aria-label={app.name} $running={app.running}>
          {app.name === 'Calendar'
            ? <CalendarTile $fill="#fbfbfb"><CalendarMonth>DEC</CalendarMonth>1</CalendarTile>
            : <Tile $fill={app.fill}>{app.art}</Tile>}
          {app.badge && <Badge>{app.badge}</Badge>}
        </DockItem>
      );
    })}
    <DockItem aria-label="Downloads"><FilesArt /></DockItem>
    <DockItem aria-label="Trash"><TrashArt /></DockItem>
  </Dock>
);

const App = () => (
  <>
    <GlobalStyle />
    <Desktop>
      <TopMenu />
      <Window>
        <Title />
        <Tabs />
        <RibbonTools />
        <Formula />
        <Grid />
        <Bottom />
      </Window>
      <AppDock />
      <Preview aria-label="Screenshot preview"><PreviewArt /></Preview>
    </Desktop>
  </>
);

export default App;
